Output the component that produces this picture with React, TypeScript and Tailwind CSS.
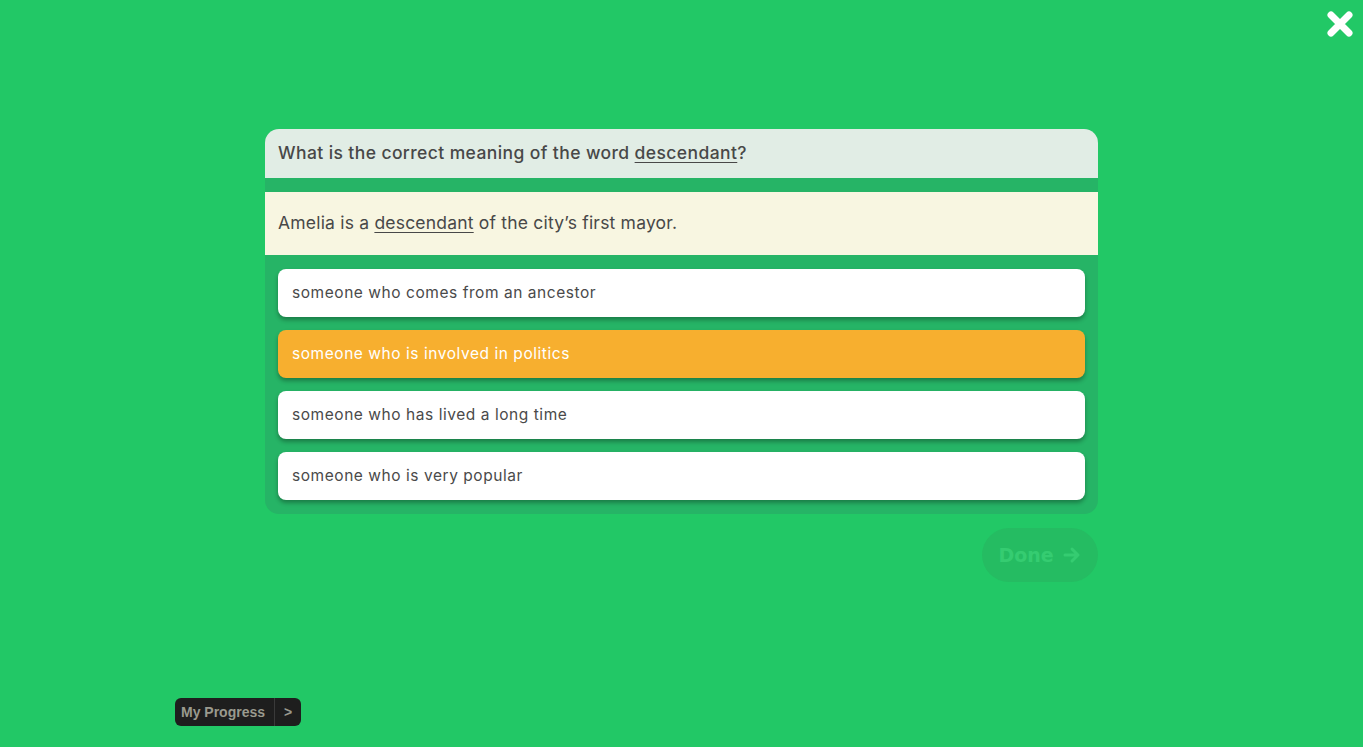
import React from 'react';

const OPTIONS = [
  { text: 'someone who comes from an ancestor', selected: false },
  { text: 'someone who is involved in politics', selected: true },
  { text: 'someone who has lived a long time', selected: false },
  { text: 'someone who is very popular', selected: false },
];

const font = { fontFamily: "Inter, 'Open Sans', sans-serif" };

export default function App() {
  return (
    <div className="relative w-full min-h-[747px] bg-[#22c866] overflow-hidden" style={font}>
      {/* close */}
      <button className="absolute top-[10px] right-[9px] w-[28px] h-[28px]">
        <svg viewBox="0 0 28 28" width="28" height="28">
          <path d="M5 5 L23 23 M23 5 L5 23" stroke="#fff" strokeWidth="7" strokeLinecap="round" />
        </svg>
      </button>

      <div className="flex flex-col items-center pt-[129px]">
        <div className="w-[833px] flex flex-col">
          <div className="rounded-[14px] bg-[#26b466] overflow-hidden pb-[14px]">
            <div className="h-[49px] bg-[#e1ede5] flex items-center px-[13px] text-[17.5px] font-medium text-[#484848] tracking-[0.4px]">
              What is the correct meaning of the word&nbsp;<span className="underline underline-offset-[3px]">descendant</span>?
            </div>
            <div className="mt-[14px] h-[63px] bg-[#f8f6e1] flex items-center px-[13px] text-[17.5px] text-[#484848] tracking-[0.2px]">
              Amelia is a&nbsp;<span className="underline underline-offset-[3px]">descendant</span>&nbsp;of the city’s first mayor.
            </div>
            <div className="flex flex-col gap-[13px] px-[13px] pt-[14px]">
              {OPTIONS.map(o => (
                <div
                  key={o.text}
                  className={`h-[48px] rounded-[8px] flex items-center px-[14px] text-[15.5px] tracking-[0.55px] shadow-[0_3px_4px_rgba(0,0,0,0.3)] ${o.selected ? 'bg-[#f7af2f] text-white' : 'bg-white text-[#4a4a4a]'}`}
                >
                  {o.text}
                </div>
              ))}
            </div>
          </div>

          <div className="flex justify-end mt-[14px]">
            <button className="w-[116px] h-[54px] rounded-full bg-[#25bc62] flex items-center justify-center gap-[8px] text-[19px] font-bold text-[#35cc71]" style={{ fontFamily: "'DejaVu Sans', sans-serif" }}>
              Done
              <svg viewBox="0 0 20 20" width="20" height="20">
                <path d="M3 10 H16 M10 4 L16 10 L10 16" stroke="#35cc71" strokeWidth="3" fill="none" strokeLinecap="round" strokeLinejoin="round" />
              </svg>
            </button>
          </div>
        </div>
      </div>

      <div className="absolute left-[175px] top-[698px] h-[28px] flex items-stretch rounded-[6px] bg-[#1e1e1e] text-[#9a9a8e] text-[14px] font-bold" style={{ fontFamily: "'Liberation Sans', Arial, sans-serif" }}>
        <span className="flex items-center pl-[6px] pr-[9px]">My Progress</span>
        <span className="w-px bg-[#3a3a3a]" />
        <span className="flex items-center px-[9px]">&gt;</span>
      </div>
    </div>
  );
}
